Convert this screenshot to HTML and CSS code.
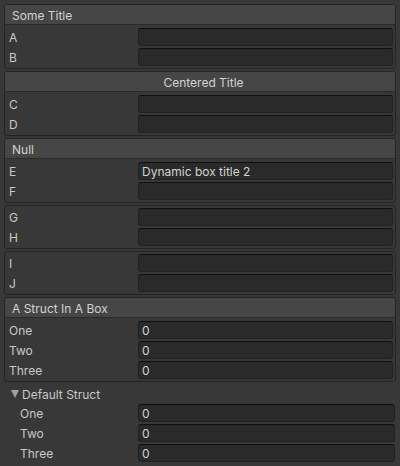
FILE: index.html
```html
<!DOCTYPE html>
<html>
<head>
<meta charset="utf-8">
<link rel="stylesheet" href="styles.css">
</head>
<body>
<div class="inspector">
  <div class="box">
    <div class="box-header">Some Title</div>
    <div class="box-body">
      <div class="row"><span class="label">A</span><div class="field"></div></div>
      <div class="row"><span class="label">B</span><div class="field"></div></div>
    </div>
  </div>
  <div class="box">
    <div class="box-header centered">Centered Title</div>
    <div class="box-body">
      <div class="row"><span class="label">C</span><div class="field"></div></div>
      <div class="row"><span class="label">D</span><div class="field"></div></div>
    </div>
  </div>
  <div class="box">
    <div class="box-header">Null</div>
    <div class="box-body">
      <div class="row"><span class="label">E</span><div class="field">Dynamic box title 2</div></div>
      <div class="row"><span class="label">F</span><div class="field"></div></div>
    </div>
  </div>
  <div class="box">
    <div class="box-body plain">
      <div class="row"><span class="label">G</span><div class="field"></div></div>
      <div class="row"><span class="label">H</span><div class="field"></div></div>
    </div>
  </div>
  <div class="box">
    <div class="box-body plain">
      <div class="row"><span class="label">I</span><div class="field"></div></div>
      <div class="row"><span class="label">J</span><div class="field"></div></div>
    </div>
  </div>
  <div class="box">
    <div class="box-header">A Struct In A Box</div>
    <div class="box-body">
      <div class="row"><span class="label">One</span><div class="field">0</div></div>
      <div class="row"><span class="label">Two</span><div class="field">0</div></div>
      <div class="row"><span class="label">Three</span><div class="field">0</div></div>
    </div>
  </div>
  <div class="foldout">
    <div class="foldout-head"><span class="arrow"></span><span>Default Struct</span></div>
    <div class="foldout-body">
      <div class="row"><span class="label indent">One</span><div class="field wide">0</div></div>
      <div class="row"><span class="label indent">Two</span><div class="field wide">0</div></div>
      <div class="row"><span class="label indent">Three</span><div class="field wide">0</div></div>
    </div>
  </div>
</div>
</body>
</html>
```
FILE: styles.css
```css
html, body {
  margin: 0;
  padding: 0;
  background: #383838;
}
body {
  font-family: Inter, "Liberation Sans", sans-serif;
  font-size: 12px;
  color: #c8c8c8;
  width: 400px;
  height: 466px;
  overflow: hidden;
}
.inspector {
  padding: 4px 4px 0 4px;
  display: flex;
  flex-direction: column;
}
.box {
  border: 1px solid #242424;
  border-radius: 3px;
  background: #383838;
  margin-bottom: 2px;
  width: 392px;
  box-sizing: border-box;
}
.box-header {
  height: 19px;
  line-height: 22px;
  background: #464646;
  border-bottom: 1px solid #2a2a2a;
  padding-left: 7px;
  color: #d2d2d2;
  border-radius: 2px 2px 0 0;
  overflow: hidden;
}
.box-header.centered {
  text-align: center;
}
.box-body {
  padding: 3px 2px 2px 4px;
  display: flex;
  flex-direction: column;
  gap: 2px;
}
.box-body.plain {
  padding-top: 2px;
}
.row {
  display: flex;
  align-items: flex-start;
  height: 18px;
}
.label {
  width: 129px;
  flex: none;
  padding-top: 2px;
  line-height: 16px;
}
.field {
  flex: 1;
  height: 18px;
  box-sizing: border-box;
  background: #2a2a2a;
  border: 1px solid #212121;
  border-top-color: #0f0f0f;
  border-radius: 3px;
  padding-top: 2px;
  line-height: 14px;
  padding-left: 3px;
  color: #d2d2d2;
}
.foldout-head {
  height: 20px;
  display: flex;
  align-items: center;
  padding-left: 3px;
}
.arrow {
  width: 0;
  height: 0;
  border-left: 4.5px solid transparent;
  border-right: 4.5px solid transparent;
  border-top: 8px solid #a0a0a0;
  margin-right: 3px;
  margin-left: 4px;
}
.foldout-body {
  display: flex;
  flex-direction: column;
  gap: 2px;
}
.label.indent {
  width: 134px;
  padding-left: 16px;
  box-sizing: border-box;
}
.field.wide {
  margin-right: 1px;
}
```
